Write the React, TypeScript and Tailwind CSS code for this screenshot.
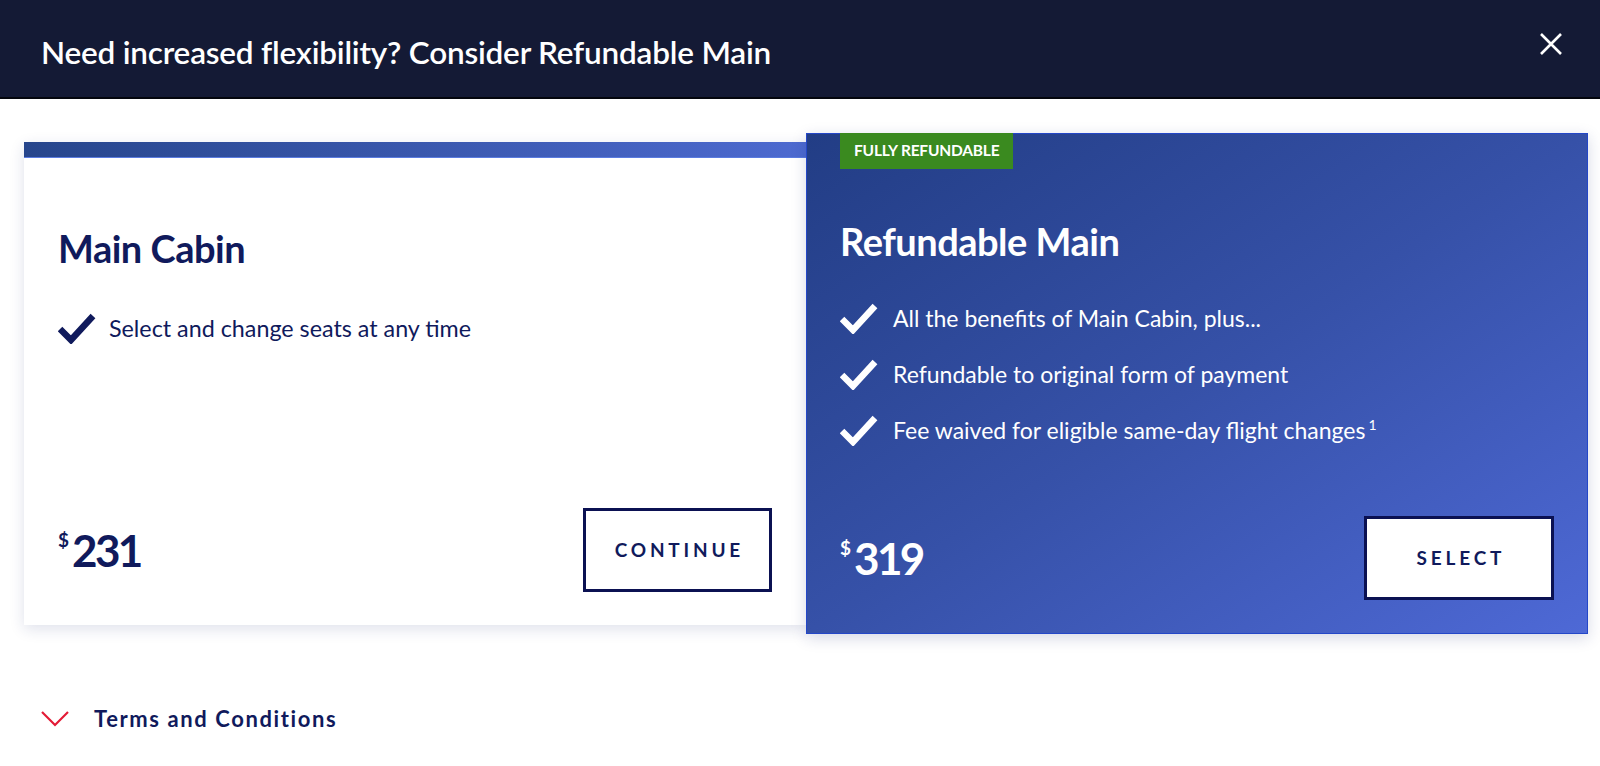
import React from "react";

const navy = "text-[#101a5c]";

const Check: React.FC<{ color: string }> = ({ color }) => (
  <svg width="38" height="32" viewBox="0 0 38 32" fill="none" className="shrink-0">
    <polyline points="2,17 13,28 35,4" stroke={color} strokeWidth="6.5" strokeLinejoin="miter" />
  </svg>
);

const App: React.FC = () => {
  return (
    <div className="min-h-screen bg-white font-['Lato',sans-serif]">
      {/* header */}
      <header className="h-[99px] bg-[#141a35] border-b-2 border-[#04060d] flex items-center justify-between pl-[41px] pr-[37px]">
        <h1 className="mt-[8px] text-white text-[31.5px] font-semibold leading-none tracking-[-0.2px]">
          Need increased flexibility? Consider Refundable Main
        </h1>
        <button aria-label="Close" className="-mt-[9px] w-[24px] h-[24px] flex items-center justify-center">
          <svg width="24" height="24" viewBox="0 0 24 24">
            <path d="M2 2 L22 22 M22 2 L2 22" stroke="white" strokeWidth="2.6" />
          </svg>
        </button>
      </header>

      {/* fare cards */}
      <div className="pl-6 pt-[34px] flex items-center">
        {/* Main Cabin */}
        <div className="w-[782px] h-[483px] flex flex-col bg-white shadow-[0_4px_14px_rgba(30,40,110,0.14)]">
          <div className="h-4 bg-gradient-to-r from-[#27468c] to-[#4d6ad0] border-b border-[#5a7be0]" />
          <div className="flex-1 flex flex-col px-[34px]">
            <h2 className={`mt-[67px] text-[38px] leading-[46px] font-bold tracking-[-0.5px] ${navy}`}>Main Cabin</h2>
            <div className="mt-[40px] flex items-center gap-[13px]">
              <Check color="#101a5c" />
              <span className={`text-[23.3px] ${navy}`}>Select and change seats at any time</span>
            </div>
            <div className="mt-auto pb-[33px] flex items-center justify-between">
              <div className={`flex items-start font-bold ${navy}`}>
                <span className="text-[19px] leading-none mt-[2px] mr-[3px]">$</span>
                <span className="text-[44px] leading-none tracking-[-0.06em]">231</span>
              </div>
              <button className={`w-[189px] h-[84px] border-[3px] border-[#0b1152] bg-white text-[19px] font-bold tracking-[0.2em] pl-[0.2em] ${navy}`}>
                CONTINUE
              </button>
            </div>
          </div>
        </div>

        {/* Refundable Main */}
        <div className="w-[782px] h-[501px] flex flex-col px-[33px] border border-[#2447c8] bg-gradient-to-br from-[#223d85] via-[#3651a8] to-[#4e69d6] shadow-[0_4px_14px_rgba(30,40,110,0.18)]">
          <div className="self-start h-[36px] px-[14px] bg-[#3a8a1f] flex items-center text-white text-[15.5px] font-bold tracking-[-0.2px] -mt-px">
            FULLY REFUNDABLE
          </div>
          <h2 className="mt-[49px] text-white text-[38px] leading-[46px] font-bold tracking-[-0.5px]">Refundable Main</h2>
          <ul className="mt-[38px] flex flex-col gap-[24px] text-white text-[23px]">
            <li className="flex items-center gap-[15px] h-[32px]">
              <Check color="#ffffff" />
              <span>All the benefits of Main Cabin, plus...</span>
            </li>
            <li className="flex items-center gap-[15px] h-[32px]">
              <Check color="#ffffff" />
              <span>Refundable to original form of payment</span>
            </li>
            <li className="flex items-center gap-[15px] h-[32px]">
              <Check color="#ffffff" />
              <span>
                Fee waived for eligible same-day flight changes
                <sup className="text-[14px] ml-[3px] -top-[0.6em]">1</sup>
              </span>
            </li>
          </ul>
          <div className="mt-auto pb-[33px] flex items-center justify-between">
            <div className="flex items-start font-bold text-white">
              <span className="text-[19px] leading-none mt-[2px] mr-[3px]">$</span>
              <span className="text-[44px] leading-none tracking-[-0.06em]">319</span>
            </div>
            <button className={`w-[190px] h-[84px] border-[3px] border-[#0b1152] bg-white text-[19px] font-bold tracking-[0.2em] pl-[0.2em] ${navy}`}>
              SELECT
            </button>
          </div>
        </div>
      </div>

      {/* terms */}
      <div className="mt-[68px] pl-[41px] flex items-center gap-[25px]">
        <svg width="28" height="16" viewBox="0 0 28 16" fill="none">
          <polyline points="1,1 14,14 27,1" stroke="#e31b36" strokeWidth="2.2" />
        </svg>
        <span className={`text-[22px] font-bold tracking-[1.6px] ${navy}`}>Terms and Conditions</span>
      </div>
    </div>
  );
};

export default App;
